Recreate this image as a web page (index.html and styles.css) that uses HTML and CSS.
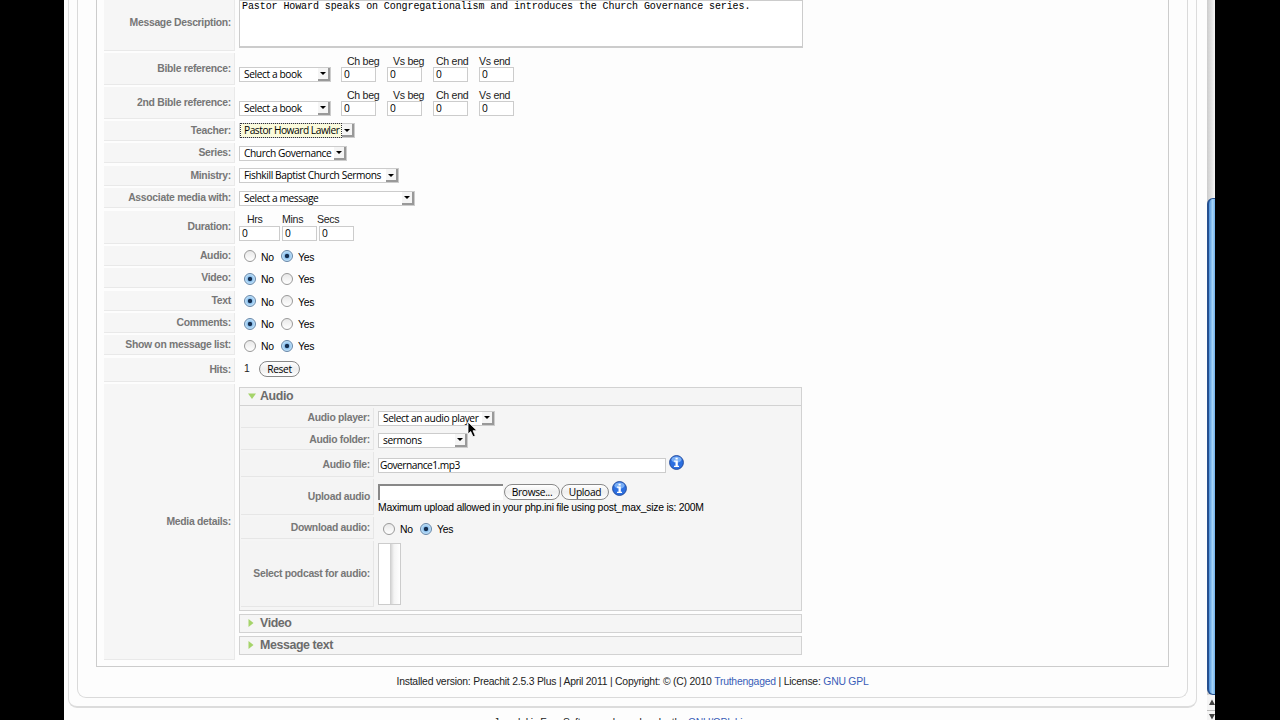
FILE: index.html
```html
<!DOCTYPE html>
<html lang="en">
<head>
  <meta charset="UTF-8" />
  <title>Preachit - Edit message</title>
  <link rel="stylesheet" href="styles.css">
</head>
<body>
  <div class="window">
    <div class="content">
      <div class="outer-box">
        <div class="middle-box">
          <div class="form-box">
            <div class="form">

              <div class="key">Message Description:</div>
              <div class="value top"><div class="textarea">Pastor Howard speaks on Congregationalism and introduces the Church Governance series.</div></div>

              <!-- Bible references -->
              <div class="key">Bible reference:</div>
              <div class="value refs">
                <span class="select book"><span>Select a book</span><i></i></span>
                <label class="num">Ch beg<b>0</b></label>
                <label class="num">Vs beg<b>0</b></label>
                <label class="num ch-end">Ch end<b>0</b></label>
                <label class="num vs-end">Vs end<b>0</b></label>
              </div>

              <div class="key">2nd Bible reference:</div>
              <div class="value refs">
                <span class="select book"><span>Select a book</span><i></i></span>
                <label class="num">Ch beg<b>0</b></label>
                <label class="num">Vs beg<b>0</b></label>
                <label class="num ch-end">Ch end<b>0</b></label>
                <label class="num vs-end">Vs end<b>0</b></label>
              </div>

              <div class="key">Teacher:</div>
              <div class="value"><span class="select teacher focused"><span>Pastor Howard Lawler</span><i></i></span></div>

              <div class="key">Series:</div>
              <div class="value"><span class="select series"><span>Church Governance</span><i></i></span></div>

              <div class="key">Ministry:</div>
              <div class="value"><span class="select ministry"><span>Fishkill Baptist Church Sermons</span><i></i></span></div>

              <div class="key">Associate media with:</div>
              <div class="value"><span class="select message"><span>Select a message</span><i></i></span></div>

              <div class="key">Duration:</div>
              <div class="value duration">
                <label class="num hrs">Hrs<b>0</b></label>
                <label class="num mins">Mins<b>0</b></label>
                <label class="num secs">Secs<b>0</b></label>
              </div>

              <!-- Yes / No switches -->
              <div class="key">Audio:</div>
              <div class="value radios"><i class="radio"></i><span>No</span><i class="radio on"></i><span>Yes</span></div>

              <div class="key">Video:</div>
              <div class="value radios"><i class="radio on"></i><span>No</span><i class="radio"></i><span>Yes</span></div>

              <div class="key">Text</div>
              <div class="value radios"><i class="radio on"></i><span>No</span><i class="radio"></i><span>Yes</span></div>

              <div class="key">Comments:</div>
              <div class="value radios"><i class="radio on"></i><span>No</span><i class="radio"></i><span>Yes</span></div>

              <div class="key">Show on message list:</div>
              <div class="value radios"><i class="radio"></i><span>No</span><i class="radio on"></i><span>Yes</span></div>

              <div class="key">Hits:</div>
              <div class="value hits"><span>1</span><span class="button reset">Reset</span></div>

              <!-- Media -->
              <div class="key">Media details:</div>
              <div class="value media">
                <div class="panel">
                  <div class="panel-title open"><svg width="8" height="6" viewBox="0 0 8 6"><path d="M0 0.5H8L4 6Z" fill="#a5d46a"/></svg>Audio</div>
                  <div class="panel-body">
                    <div class="key">Audio player:</div>
                    <div class="value"><span class="select player"><span>Select an audio player</span><i></i></span></div>

                    <div class="key">Audio folder:</div>
                    <div class="value"><span class="select folder"><span>sermons</span><i></i></span></div>

                    <div class="key">Audio file:</div>
                    <div class="value file">
                      <span class="text-input">Governance1.mp3</span>
                      <svg class="info" width="15" height="15" viewBox="0 0 15 15"><circle cx="7.5" cy="7.5" r="6.9" fill="#2c6fe0" stroke="#244c9e"/><ellipse cx="7.5" cy="4.6" rx="5" ry="3.2" fill="#79aef5"/><path d="M6.5 2.8h2.2v1.7H6.5zM5 5.6h3.8v5.2H10V12H5v-1.2h1.5V6.8H5z" fill="#fff"/></svg>
                    </div>

                    <div class="key">Upload audio</div>
                    <div class="value upload">
                      <div class="upload-row">
                        <span class="file-input"></span>
                        <span class="button browse">Browse...</span>
                        <span class="button send">Upload</span>
                        <svg class="info" width="15" height="15" viewBox="0 0 15 15"><circle cx="7.5" cy="7.5" r="6.9" fill="#2c6fe0" stroke="#244c9e"/><ellipse cx="7.5" cy="4.6" rx="5" ry="3.2" fill="#79aef5"/><path d="M6.5 2.8h2.2v1.7H6.5zM5 5.6h3.8v5.2H10V12H5v-1.2h1.5V6.8H5z" fill="#fff"/></svg>
                      </div>
                      <div class="upload-note">Maximum upload allowed in your php.ini file using post_max_size is: 200M</div>
                    </div>

                    <div class="key">Download audio:</div>
                    <div class="value radios"><i class="radio"></i><span>No</span><i class="radio on"></i><span>Yes</span></div>

                    <div class="key">Select podcast for audio:</div>
                    <div class="value"><span class="listbox"></span></div>
                  </div>
                </div>
                <div class="panel"><div class="panel-title"><svg width="6" height="8" viewBox="0 0 6 8"><path d="M0.5 0L5.5 4L0.5 8Z" fill="#a5d46a"/></svg>Video</div></div>
                <div class="panel"><div class="panel-title"><svg width="6" height="8" viewBox="0 0 6 8"><path d="M0.5 0L5.5 4L0.5 8Z" fill="#a5d46a"/></svg>Message text</div></div>
              </div>
            </div>
          </div>
          <div class="version">Installed version: Preachit 2.5.3 Plus | April 2011 | Copyright: © (C) 2010 <a>Truthengaged</a> | License: <a>GNU GPL</a></div>
        </div>
      </div>
      <div class="footer">Joomla! is Free Software released under the <a>GNU/GPL License.</a></div>
    </div>

    <div class="scrollbar">
      <div class="thumb"></div>
      <svg width="8" height="25" viewBox="0 0 8 25"><path d="M0 15.5H8" stroke="#bbb"/><path d="M2 10L5 4.5L8 10ZM2 19H8L5 24.5Z" fill="#444"/></svg>
    </div>
  </div>

  <svg class="cursor" width="11" height="17" viewBox="0 0 11 17"><path d="M1 1V13L3.7 10.5L6 15.7L8.3 14.7L6 9.7H10Z" fill="#000" stroke="#fff" stroke-width="0.8"/></svg>
</body>
</html>
```

FILE: styles.css
```css
* {
  box-sizing: border-box;
}

body {
  margin: 0;
  background: #000;
  font-family: "Liberation Sans", Arial, sans-serif;
  font-size: 10.4px;
  line-height: 12px;
  letter-spacing: -0.3px;
  color: #222;
  overflow: hidden;
}

a {
  color: #3a5db8;
}

.window {
  display: flex;
  height: 720px;
  margin: 0 65px 0 64px;
  background: #fdfdfd;
  overflow: hidden;
}

.content {
  width: 1143px;
  padding: 0 10px 0 4px;
}

/* Nested frames of the admin template */
.outer-box {
  height: 708px;
  padding: 0 8px 9px;
  border: 1px solid #dcdcdc;
  border-width: 0 1px 2px;
  border-radius: 0 0 9px 9px;
}

.middle-box {
  height: 698px;
  padding: 0 18px;
  border: 1px solid #dadada;
  border-top: 0;
  border-radius: 0 0 9px 9px;
}

.form-box {
  height: 667px;
  padding: 0 7px;
  border: 1px solid #ccc;
  border-top: 0;
}

/* Form rows */
.form {
  display: grid;
  grid-template-columns: 131px 564px;
  grid-template-rows: 51px 31.4px 31.4px repeat(4, 20px) 33px repeat(5, 20px) 24px 275.6px;
  row-gap: 2.4px;
  column-gap: 4px;
}

.key {
  display: flex;
  align-items: center;
  justify-content: flex-end;
  padding: 1px 3px 0 0;
  background: #f6f6f6;
  border-right: 1px solid #e9e9e9;
  border-bottom: 1px solid #e9e9e9;
  color: #777;
  font-weight: bold;
  white-space: nowrap;
}

.form > .key:first-child {
  padding-bottom: 5px;
}

.value {
  display: flex;
  align-items: center;
  white-space: nowrap;
}

.top {
  align-items: flex-start;
}

.textarea {
  width: 565px;
  height: 48px;
  padding: 0 2px;
  background: #fff;
  border: 1px solid #ccc;
  border-bottom-width: 2px;
  font-family: "Liberation Mono", "Courier New", monospace;
  font-size: 10px;
  letter-spacing: -0.09px;
  color: #000;
}

/* Controls */
.select {
  display: flex;
  justify-content: space-between;
  height: 15px;
  padding-left: 4px;
  background: #fff;
  border: 1px solid #ccc;
  font-family: "Open Sans", sans-serif;
  font-size: 10.2px;
  letter-spacing: -0.4px;
  line-height: 13px;
  color: #000;
}

.select i {
  display: flex;
  align-items: center;
  justify-content: center;
  width: 12px;
  background: #f5f5f5;
  border-right: 2px solid #999;
  border-bottom: 2px solid #999;
}

.select i::after {
  content: "";
  margin-top: 1px;
  border: 3px solid transparent;
  border-top-color: #000;
  border-bottom: 0;
}

.book { width: 92px; }
.teacher { width: 116px; }
.series { width: 108px; }
.ministry { width: 160px; }
.message { width: 176px; }
.player { width: 117px; }
.folder { width: 90px; }

.focused {
  padding-left: 1px;
  letter-spacing: -0.47px;
}

.focused span {
  width: 100px;
  padding: 0 3px;
  background: #fbfbdc;
  outline: 1px dotted #333;
}

.refs {
  align-items: flex-end;
  padding-bottom: 3px;
}

.refs .book {
  margin-right: 10px;
}

.num {
  width: 46px;
  padding-left: 6px;
  font-size: 10.6px;
}

.num b {
  display: block;
  width: 35px;
  height: 15px;
  margin: 0 0 0 -6px;
  padding-left: 2px;
  background: #fff;
  border: 1px solid #ccc;
  font: 10.2px/13px "Open Sans", sans-serif;
  color: #000;
}

.ch-end { padding-left: 3px; }
.ch-end b { margin-left: -3px; }
.vs-end { padding-left: 0; }
.vs-end b { margin-left: 0; }

.duration {
  align-items: flex-end;
  padding-bottom: 3px;
}

.duration .num b { margin-top: 1px; }
.hrs { width: 43px; padding-left: 8px; }
.hrs b { width: 41px; margin-left: -8px; }
.mins { width: 35px; padding-left: 0; }
.mins b { margin-left: 0; }
.secs { padding-left: 0; }
.secs b { margin-left: 2px; }

.radios {
  padding: 1px 0 0 5px;
}

.radios span {
  width: 20px;
  margin: 3px 0 0 5px;
  color: #000;
}

.radio {
  width: 12px;
  height: 12px;
  border: 1px solid #999;
  border-radius: 50%;
  background: linear-gradient(#e8e8e8, #fff);
}

.radio.on {
  border-color: #6686a8;
  background: radial-gradient(circle, #152f50 0 1.8px, #8fc2ee 2.6px, #c5e5fb 5px);
}

.hits {
  padding-bottom: 2px;
}

.hits span:first-child {
  width: 20px;
  padding-left: 5px;
}

.button {
  height: 16px;
  background: linear-gradient(#fff, #eee 50%, #fff);
  border: 1px solid #888;
  border-radius: 8px;
  font: 10.2px/14px "Open Sans", sans-serif;
  letter-spacing: -0.3px;
  color: #000;
  text-align: center;
}

.reset { width: 41px; }
.browse { width: 56px; margin-left: 1px; }
.send { width: 48px; margin-left: 1px; }

/* Sliding panels */
.media {
  flex-direction: column;
  align-items: stretch;
  gap: 3px;
  padding-top: 3px;
}

.panel {
  width: 563px;
  background: #f5f5f5;
  border: 1px solid #d2d2d2;
}

.panel-title {
  display: flex;
  align-items: center;
  height: 17px;
  padding: 0 0 1px 8px;
  font-size: 12.4px;
  font-weight: bold;
  letter-spacing: -0.4px;
  color: #6c6c6c;
}

.panel-title svg {
  margin-right: 6px;
}

.panel-title.open svg {
  margin-right: 4px;
}

.panel-body {
  display: grid;
  grid-template-columns: 133px 1fr;
  grid-template-rows: 20px 20px 25px 36px 22px 66px;
  row-gap: 2px;
  column-gap: 4px;
  height: 205px;
  padding: 2px 0 0 1px;
  border-top: 1px solid #d2d2d2;
}

.panel-body .key {
  background: #f4f4f4;
  border-color: #e6e6e6;
}

.text-input {
  width: 288px;
  height: 15px;
  margin-top: 2px;
  padding-left: 1px;
  background: #fff;
  border: 1px solid #ccc;
  font: 10.2px/13px "Open Sans", sans-serif;
  letter-spacing: -0.5px;
  color: #000;
}

.info {
  margin: -4px 0 0 3px;
}

.value.upload {
  flex-direction: column;
  align-items: flex-start;
  padding-top: 5px;
}

.upload-row {
  display: flex;
  align-items: center;
  height: 16px;
}

.upload-row .info {
  margin-top: -7px;
}

.file-input {
  width: 125px;
  height: 16px;
  background: #fff;
  border-top: 2px solid #888;
  border-left: 2px solid #888;
}

.upload-note {
  margin-top: 2px;
  letter-spacing: -0.24px;
  color: #000;
}

.listbox {
  width: 23px;
  height: 62px;
  background: linear-gradient(90deg, #fff 11px, #ccc 11px, #f4f4f4 15px, #fff);
  border: 1px solid #ccc;
}

.version {
  padding-top: 9px;
  letter-spacing: -0.22px;
  text-align: center;
}

.footer {
  padding-top: 9px;
  text-align: center;
  white-space: nowrap;
}

/* Browser scrollbar, cut off on the right */
.scrollbar {
  display: flex;
  flex-direction: column;
  width: 8px;
  padding-top: 198px;
  background: linear-gradient(90deg, #ccc, #f6f6f6);
}

.thumb {
  height: 497px;
  border: 1px solid #26508f;
  border-right: 0;
  border-left-width: 2px;
  border-radius: 6px 0 0 6px;
  background: linear-gradient(90deg, #4f93dc, #a5d4f8 60%, #6fb0ec);
}

.scrollbar svg {
  background: #f4f4f4;
}

.cursor {
  position: absolute;
  left: 467px;
  top: 421px;
}
```
